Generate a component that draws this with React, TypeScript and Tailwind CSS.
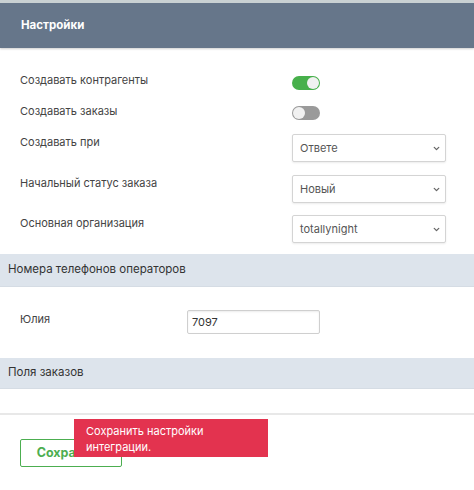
import { ChevronDown } from "lucide-react";

function Toggle({ on }: { on: boolean }) {
  return (
    <div
      className={`flex h-[14px] w-[28px] items-center rounded-full px-[1px] ${
        on ? "justify-end bg-[#47b04b]" : "justify-start bg-[#9a9a9a]"
      }`}
    >
      <div className="h-[12px] w-[12px] rounded-full bg-[#f1f1f1]" />
    </div>
  );
}

function Select({ value }: { value: string }) {
  return (
    <div className="flex h-[28px] w-[154px] items-center justify-between rounded-[2px] border border-[#d4d4d4] bg-white pl-[7px] pr-[4px] text-[11px] text-[#555] shadow-[0_1px_2px_rgba(0,0,0,0.08)]">
      <span>{value}</span>
      <ChevronDown size={9} strokeWidth={3.5} className="text-[#666]" />
    </div>
  );
}

const toggles = [
  { label: "Создавать контрагенты", on: true, mt: "mt-[24px]", tm: "mt-[4px]" },
  { label: "Создавать заказы", on: false, mt: "mt-[15px]", tm: "mt-[3px]" },
];

const selects = [
  { label: "Создавать при", value: "Ответе", mt: "mt-[15px]" },
  { label: "Начальный статус заказа", value: "Новый", mt: "mt-[13px]" },
  { label: "Основная организация", value: "totallynight", mt: "mt-[12px]" },
];

export default function App() {
  return (
    <div className="relative h-[490px] w-[474px] overflow-hidden bg-white font-['Inter',sans-serif] text-[11px] text-[#444]">
      <div className="flex h-[48px] items-center border-t-[3px] border-[#c9d1d3] bg-[#66768a] pl-[21px] text-[11.5px] font-bold text-white shadow-[0_1px_2px_rgba(0,0,0,0.2)]">
        Настройки
      </div>

      <div className="px-[20px]">
        {toggles.map((t) => (
          <div key={t.label} className={`flex h-[16px] items-start ${t.mt}`}>
            <div className="w-[272px] leading-[16px]">{t.label}</div>
            <div className={t.tm}>
              <Toggle on={t.on} />
            </div>
          </div>
        ))}
        {selects.map((s) => (
          <div key={s.label} className={`flex items-start ${s.mt}`}>
            <div className="w-[272px] leading-[16px]">{s.label}</div>
            <Select value={s.value} />
          </div>
        ))}
      </div>

      <div className="mt-[11px] flex h-[33px] items-center border-b border-[#d5dce4] bg-[#dde4ec] pl-[8px] text-[11.5px] text-[#333]">
        Номера телефонов операторов
      </div>

      <div className="mt-[23px] flex items-start px-[20px]">
        <div className="w-[167px] pt-[1px] leading-[16px]">Юлия</div>
        <div className="flex h-[24px] w-[133px] items-center rounded-[2px] border border-[#cfcfcf] pl-[4px] text-[11px] text-[#333] shadow-[inset_0_1px_2px_rgba(0,0,0,0.08)]">
          7097
        </div>
      </div>

      <div className="mt-[24px] flex h-[31px] items-center border-b border-[#d5dce4] bg-[#dde4ec] pl-[8px] text-[11.5px] text-[#333]">
        Поля заказов
      </div>

      <div className="mt-[24px] h-[2px] bg-[#e8e8e8]" />

      <div className="px-[20px] pt-[24px]">
        <button className="flex h-[28px] w-[102px] items-center justify-center rounded-[2px] border-[1.5px] border-[#4cae50] text-[12.5px] font-bold text-[#4cae50]">
          Сохранить
        </button>
      </div>

      <div className="absolute left-[74px] top-[419px] h-[38px] w-[194px] bg-[#e3334f] pl-[12px] pt-[4px] text-[11px] leading-[16px] text-white">
        Сохранить настройки
        <br />
        интеграции.
      </div>
    </div>
  );
}
